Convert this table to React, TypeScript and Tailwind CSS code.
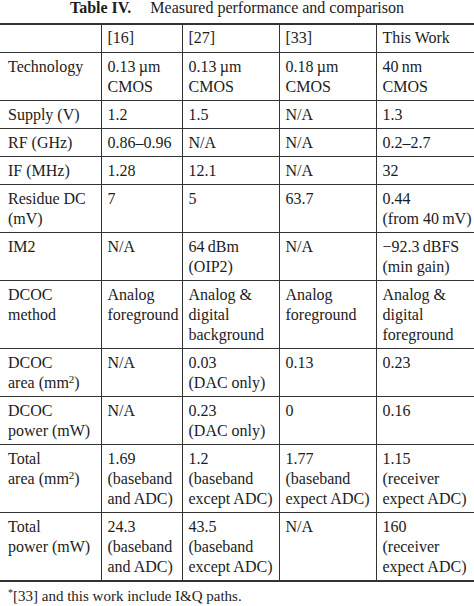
import React from 'react';

type Cell = React.ReactNode;

const sq = <sup className="text-[11px]">2</sup>;

const rows: Cell[][] = [
  [<>Technology</>, <>0.13&thinsp;µm<br />CMOS</>, <>0.13&thinsp;µm<br />CMOS</>, <>0.18&thinsp;µm<br />CMOS</>, <>40&thinsp;nm<br />CMOS</>],
  ['Supply (V)', '1.2', '1.5', 'N/A', '1.3'],
  ['RF (GHz)', '0.86–0.96', 'N/A', 'N/A', '0.2–2.7'],
  ['IF (MHz)', '1.28', '12.1', 'N/A', '32'],
  [<>Residue DC<br />(mV)</>, '7', '5', '63.7', <>0.44<br />(from 40&thinsp;mV)</>],
  ['IM2', 'N/A', <>64&thinsp;dBm<br />(OIP2)</>, 'N/A', <>−92.3&thinsp;dBFS<br />(min gain)</>],
  [<>DCOC<br />method</>, <>Analog<br />foreground</>, <>Analog &amp;<br />digital<br />background</>, <>Analog<br />foreground</>, <>Analog &amp;<br />digital<br />foreground</>],
  [<>DCOC<br />area (mm{sq})</>, 'N/A', <>0.03<br />(DAC only)</>, '0.13', '0.23'],
  [<>DCOC<br />power (mW)</>, 'N/A', <>0.23<br />(DAC only)</>, '0', '0.16'],
  [<>Total<br />area (mm{sq})</>, <>1.69<br />(baseband<br />and ADC)</>, <>1.2<br />(baseband<br />except ADC)</>, <>1.77<br />(baseband<br />expect ADC)</>, <>1.15<br />(receiver<br />expect ADC)</>],
  [<>Total<br />power (mW)</>, <>24.3<br />(baseband<br />and ADC)</>, <>43.5<br />(baseband<br />except ADC)</>, 'N/A', <>160<br />(receiver<br />expect ADC)</>],
];

const headers = ['', '[16]', '[27]', '[33]', 'This Work'];

export default function App() {
  return (
    <div className="w-[474px] h-[606px] bg-white text-[#1c1c1c] overflow-hidden" style={{ fontFamily: '"Liberation Serif", "Times New Roman", serif' }}>
      <div className="h-[23px] text-center text-[16px] leading-[16px] whitespace-nowrap">
        <span className="font-bold">Table IV.</span>
        <span className="inline-block w-[19px]" />
        <span>Measured performance and comparison</span>
      </div>
      <table className="w-full table-fixed border-collapse text-[16px] leading-[20px]">
        <colgroup>
          <col className="w-[101px]" />
          <col className="w-[81px]" />
          <col className="w-[97px]" />
          <col className="w-[97px]" />
          <col className="w-[98px]" />
        </colgroup>
        <thead>
          <tr className="border-t-2 border-b border-[#333]">
            {headers.map((h, i) => (
              <th
                key={i}
                className={`text-left font-normal align-top pt-[3px] pb-[4px] whitespace-nowrap ${i === 0 ? 'pl-[8px]' : 'pl-[6px] border-l border-[#333]'}`}
              >
                {h}
              </th>
            ))}
          </tr>
        </thead>
        <tbody>
          {rows.map((r, ri) => (
            <tr key={ri} className={`border-b border-[#333] ${ri === rows.length - 1 ? 'border-b-2' : ''}`}>
              {r.map((c, ci) => (
                <td
                  key={ci}
                  className={`align-top pt-1 pb-[3px] whitespace-nowrap ${ci === 0 ? 'pl-[8px]' : 'pl-[6px] border-l border-[#333]'}`}
                >
                  {c}
                </td>
              ))}
            </tr>
          ))}
        </tbody>
      </table>
      <div className="pl-[8px] pt-[5px] text-[15px] leading-[18px] whitespace-nowrap">
        <sup className="text-[10px]">*</sup>[33] and this work include I&amp;Q paths.
      </div>
    </div>
  );
}
